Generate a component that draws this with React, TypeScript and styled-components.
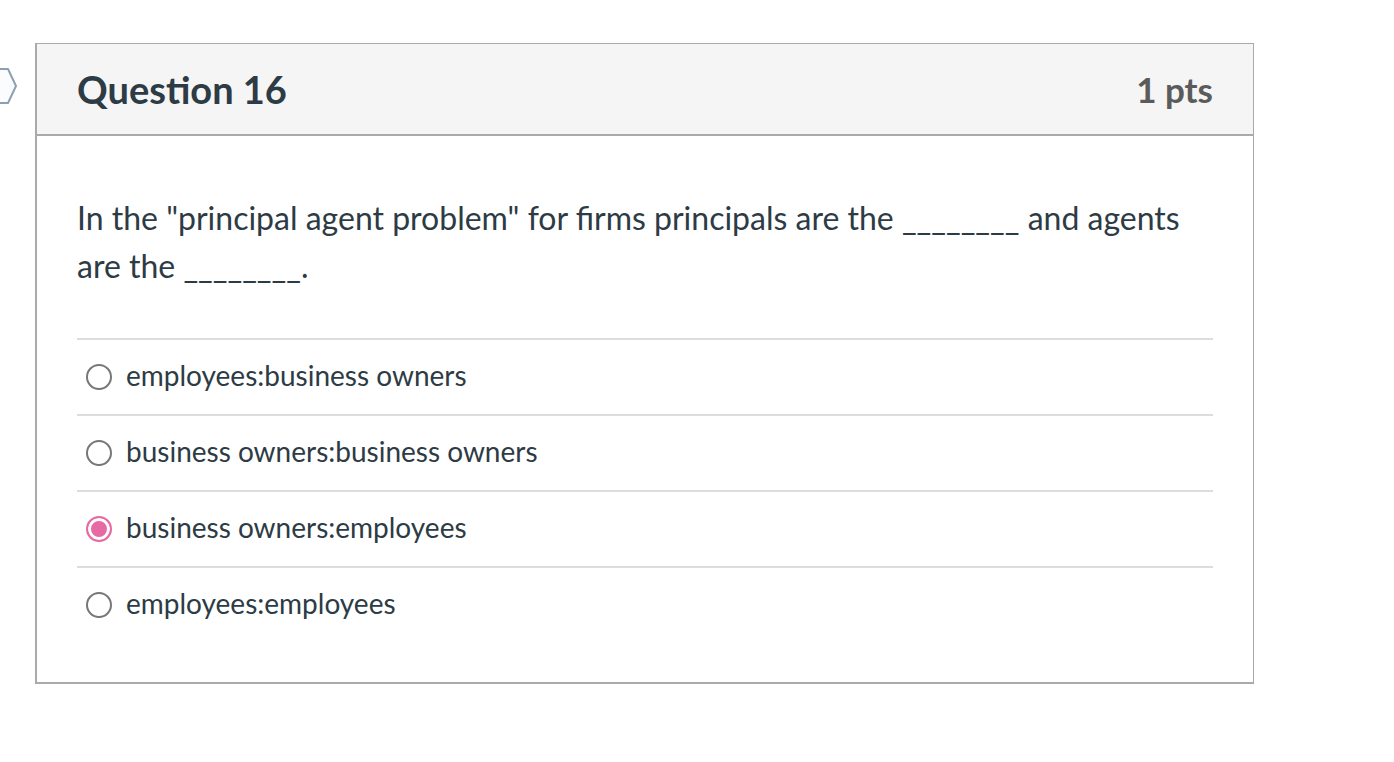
import React, { useState } from 'react';
import styled, { createGlobalStyle } from 'styled-components';

const GlobalStyle = createGlobalStyle`
  html, body {
    margin: 0;
    padding: 0;
    background: #fff;
    font-family: Lato, "Open Sans", sans-serif;
  }
`;

const answers = [
  'employees:business owners',
  'business owners:business owners',
  'business owners:employees',
  'employees:employees',
];

const App = () => {
  const [selected, setSelected] = useState(2);

  return (
    <Page>
      <GlobalStyle />
      <Marker>
        <svg width="20" height="40" viewBox="0 0 20 40">
          <path d="M-4 3 L8 3 L16 20 L8 37 L-4 37" fill="#fbfcfd" stroke="#8da0b3" strokeWidth="2" strokeLinejoin="round" />
        </svg>
      </Marker>
      <Card>
        <Header>
          <Title>Question 16</Title>
          <Points>1 pts</Points>
        </Header>
        <Body>
          <Prompt>
            In the "principal agent problem" for firms principals are the ________ and agents are the ________.
          </Prompt>
          <AnswerList>
            {answers.map((a, i) => (
              <AnswerRow key={a} onClick={() => setSelected(i)}>
                <Radio checked={selected === i} />
                <AnswerText>{a}</AnswerText>
              </AnswerRow>
            ))}
          </AnswerList>
        </Body>
      </Card>
    </Page>
  );
};

const Page = styled.div`
  position: relative;
  padding: 43px 0 0 35px;
  width: 1219px;
`;

const Marker = styled.div`
  position: absolute;
  left: 0;
  top: 66px;
  line-height: 0;
`;

const Card = styled.div`
  border: 2px solid #aaaaaa;
  border-right-width: 1px;
  background: #fff;
  width: 1216px;
`;

const Header = styled.div`
  display: flex;
  justify-content: space-between;
  align-items: center;
  height: 90px;
  padding: 0 40px;
  background: #f5f5f5;
  border-bottom: 2px solid #aaaaaa;
  margin-top: -1px;
`;

const Title = styled.h2`
  margin: 0;
  font-size: 38px;
  font-weight: 700;
  color: #2d3b45;
`;

const Points = styled.div`
  font-size: 35px;
  font-weight: 700;
  color: #5b5b5b;
`;

const Body = styled.div`
  padding: 58px 40px 40px 40px;
`;

const Prompt = styled.p`
  margin: 0 0 48px;
  font-size: 32px;
  line-height: 48px;
  color: #2d3b45;
`;

const AnswerList = styled.div`
  display: flex;
  flex-direction: column;
`;

const AnswerRow = styled.div`
  display: flex;
  align-items: center;
  gap: 14px;
  height: 74px;
  padding-left: 9px;
  border-top: 2px solid #dddddd;
  cursor: pointer;
`;

const Radio = styled.span<{ checked: boolean }>`
  box-sizing: border-box;
  width: 26px;
  height: 26px;
  border-radius: 50%;
  border: 2px solid ${p => (p.checked ? '#e66aa3' : '#777777')};
  background: ${p => (p.checked ? '#e66aa3' : '#fff')};
  box-shadow: ${p => (p.checked ? 'inset 0 0 0 3px #fff' : 'none')};
  flex: none;
`;

const AnswerText = styled.span`
  font-size: 28px;
  line-height: 1;
  margin-bottom: 4px;
  color: #2d3b45;
`;

export default App;
